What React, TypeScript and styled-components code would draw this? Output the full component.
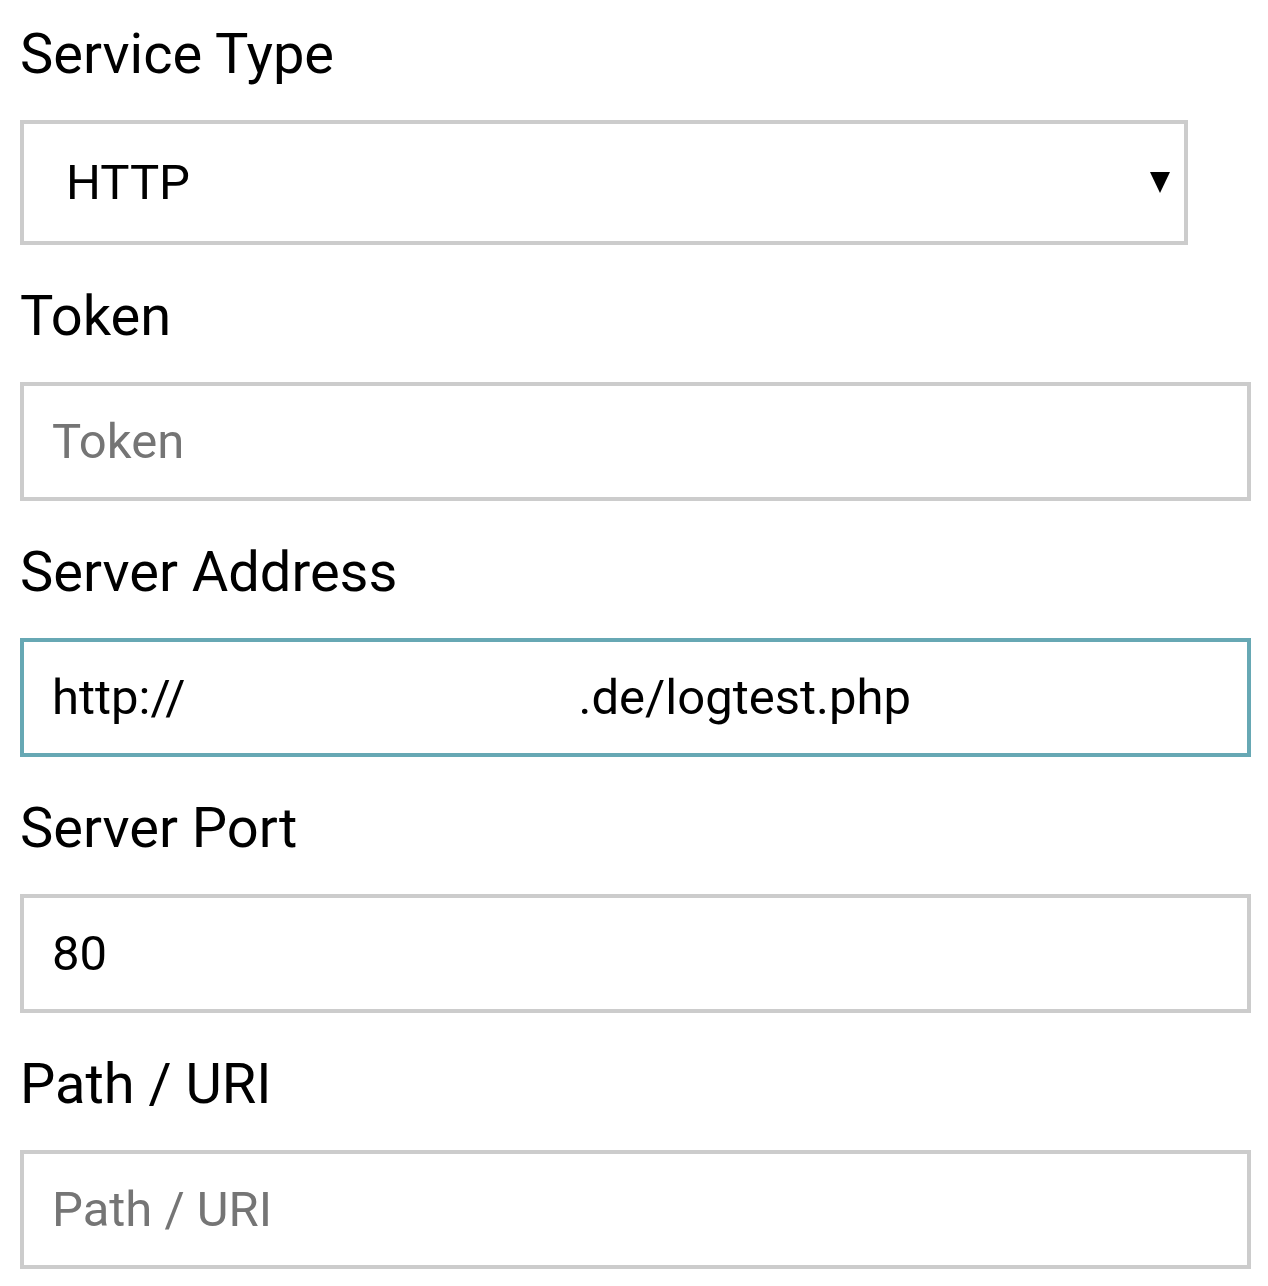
import React from "react";
import styled, { createGlobalStyle } from "styled-components";

const Global = createGlobalStyle`
  html, body { margin: 0; padding: 0; background: #fff; }
  body { font-family: Roboto, "Noto Sans", "Liberation Sans", sans-serif; color: #000; }
`;

const Page = styled.div`
  padding: 23px 17px 0 20px;
  display: flex;
  flex-direction: column;
`;

const Group = styled.div`
  display: flex;
  flex-direction: column;
  margin-bottom: 40px;
`;

const Label = styled.div`
  font-size: 56px;
  line-height: 62px;
  margin-bottom: 35px;
`;

const Box = styled.div<{ $focused?: boolean; $width?: string; $height: number; $pad: number }>`
  box-sizing: border-box;
  width: ${(p) => p.$width ?? "100%"};
  height: ${(p) => p.$height}px;
  border: 4px solid ${(p) => (p.$focused ? "#67a8b4" : "#cccccc")};
  padding: 0 14px 0 ${(p) => p.$pad}px;
  display: flex;
  align-items: center;
  font-size: 49px;
  white-space: pre;
`;

const Value = styled.span`
  color: #000;
`;

const Placeholder = styled.span`
  color: #757575;
`;

const Gap = styled.span<{ $w: number }>`
  display: inline-block;
  width: ${(p) => p.$w}px;
`;

const SelectText = styled.span`
  flex: 1;
  font-size: 49px;
`;

const Arrow = styled.span`
  width: 0;
  height: 0;
  border-left: 10.5px solid transparent;
  border-right: 10.5px solid transparent;
  border-top: 21px solid #000;
`;

export default function App() {
  return (
    <>
      <Global />
      <Page>
        <Group>
          <Label>Service Type</Label>
          <Box $width="1168px" $height={125} $pad={42}>
            <SelectText>HTTP</SelectText>
            <Arrow />
          </Box>
        </Group>
        <Group>
          <Label>Token</Label>
          <Box $height={119} $pad={28}>
            <Placeholder>Token</Placeholder>
          </Box>
        </Group>
        <Group>
          <Label>Server Address</Label>
          <Box $focused $height={119} $pad={28}>
            <Value>http://</Value>
            <Gap $w={393} />
            <Value>.de/logtest.php</Value>
          </Box>
        </Group>
        <Group>
          <Label>Server Port</Label>
          <Box $height={119} $pad={28}>
            <Value>80</Value>
          </Box>
        </Group>
        <Group>
          <Label>Path / URI</Label>
          <Box $height={119} $pad={28}>
            <Placeholder>Path / URI</Placeholder>
          </Box>
        </Group>
      </Page>
    </>
  );
}
